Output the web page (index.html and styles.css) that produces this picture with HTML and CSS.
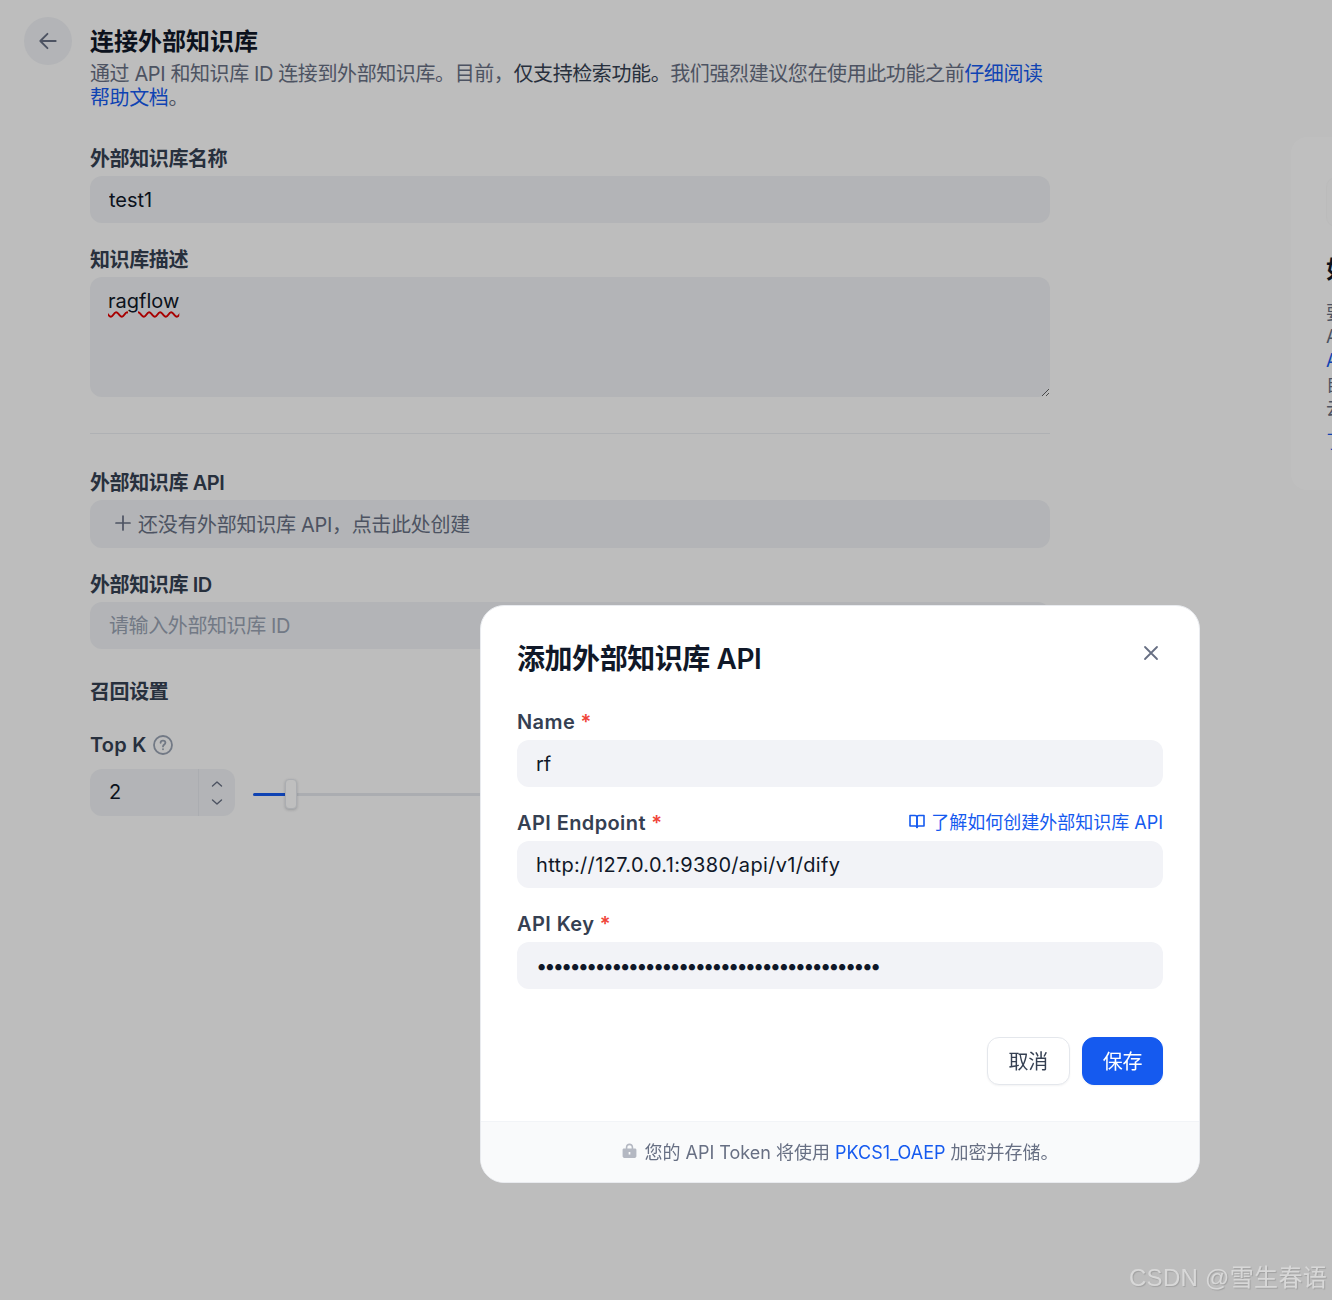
FILE: index.html
```html
<!DOCTYPE html>
<html lang="zh-CN">

<head>
  <meta charset="UTF-8">
  <meta name="viewport" content="width=device-width, initial-scale=1.0">
  <title>连接外部知识库</title>
  <link rel="stylesheet" href="styles.css">
</head>

<body>
  <div class="page">
    <button class="back" type="button" aria-label="返回">
      <svg width="22" height="22" viewBox="0 0 20 20" fill="none" stroke="currentColor" stroke-width="1.7" stroke-linecap="round" stroke-linejoin="round">
        <path d="M17 10H3M9.5 3.5L3 10L9.5 16.5" />
      </svg>
    </button>

    <main class="form">
      <h1 class="form__title">连接外部知识库</h1>
      <p class="form__desc">通过 API 和知识库 ID 连接到外部知识库。目前，<span class="form__desc-strong">仅支持检索功能。</span>我们强烈建议您在使用此功能之前<a href="#" class="link">仔细阅读帮助文档</a>。</p>

      <div class="field field--first">
        <label class="field__label">外部知识库名称</label>
        <input class="input" type="text" value="test1">
      </div>

      <div class="field">
        <label class="field__label">知识库描述</label>
        <div class="textarea"><span class="misspelt">ragflow</span></div>
      </div>

      <hr class="divider">

      <div class="field">
        <label class="field__label">外部知识库 API</label>
        <button class="add-api" type="button">
          <svg width="20" height="20" viewBox="0 0 20 20" fill="none" stroke="currentColor" stroke-width="1.7" stroke-linecap="round">
            <path d="M10 3V17M3 10H17" />
          </svg>
          <span>还没有外部知识库 API，点击此处创建</span>
        </button>
      </div>

      <div class="field">
        <label class="field__label">外部知识库 ID</label>
        <input class="input" type="text" placeholder="请输入外部知识库 ID">
      </div>

      <h2 class="form__section">召回设置</h2>

      <div class="topk">
        <div class="topk__label">
          Top K
          <svg class="topk__help" width="20" height="20" viewBox="0 0 20 20" fill="none" stroke="currentColor" stroke-width="1.8" stroke-linecap="round">
            <circle cx="10" cy="10" r="9" />
            <path d="M7.6 7.8C7.6 6.4 8.7 5.6 10 5.6C11.3 5.6 12.4 6.4 12.4 7.7C12.4 9.4 10 9.5 10 11.4" />
            <path d="M10 14.2V14.3" />
          </svg>
        </div>
        <div class="topk__row">
          <div class="stepper">
            <input class="stepper__value" type="text" value="2">
            <div class="stepper__btns">
              <svg width="12" height="8" viewBox="0 0 12 8" fill="none" stroke="currentColor" stroke-width="1.4" stroke-linecap="round" stroke-linejoin="round"><path d="M1.5 6L6 2L10.5 6" /></svg>
              <svg width="12" height="8" viewBox="0 0 12 8" fill="none" stroke="currentColor" stroke-width="1.4" stroke-linecap="round" stroke-linejoin="round"><path d="M1.5 2L6 6L10.5 2" /></svg>
            </div>
          </div>
          <div class="slider">
            <div class="slider__fill"></div>
            <div class="slider__thumb"></div>
          </div>
        </div>
      </div>
    </main>

    <aside class="guide">
      <div class="guide__icon"></div>
      <h3 class="guide__title">如何创建外部知识库 API</h3>
      <p class="guide__text">要连接到外部知识库，需要先创建外部知识库</p>
      <p class="guide__text">API，请仔细阅读并参考</p>
      <p class="guide__text guide__text--link">API 规范文档</p>
      <p class="guide__text">自行开发或部署相应的服务</p>
      <p class="guide__text">云端服务也可以直接连接</p>
      <p class="guide__more">了解更多</p>
    </aside>
  </div>

  <div class="overlay">
    <section class="modal">
      <div class="modal__body">
        <header class="modal__head">
          <h2 class="modal__title">添加外部知识库 API</h2>
          <svg class="modal__close" width="24" height="24" viewBox="0 0 24 24" fill="none" stroke="currentColor" stroke-width="1.8" stroke-linecap="round">
            <path d="M6 6L18 18M18 6L6 18" />
          </svg>
        </header>

        <div class="mfield">
          <div class="mfield__head">
            <label class="mfield__label">Name <span class="req">*</span></label>
          </div>
          <input class="input" type="text" value="rf">
        </div>

        <div class="mfield">
          <div class="mfield__head">
            <label class="mfield__label">API Endpoint <span class="req">*</span></label>
            <a href="#" class="mfield__help">
              <svg width="18" height="18" viewBox="0 0 18 18" fill="none" stroke="currentColor" stroke-width="1.6" stroke-linejoin="round">
                <path d="M2 3.5H7C8.1 3.5 9 4.4 9 5.5V15.5C9 14.6 8.3 14 7.4 14H2V3.5Z" />
                <path d="M16 3.5H11C9.9 3.5 9 4.4 9 5.5V15.5C9 14.6 9.7 14 10.6 14H16V3.5Z" />
              </svg>
              了解如何创建外部知识库 API
            </a>
          </div>
          <input class="input input--url" type="text" value="http://127.0.0.1:9380/api/v1/dify">
        </div>

        <div class="mfield">
          <div class="mfield__head">
            <label class="mfield__label">API Key <span class="req">*</span></label>
          </div>
          <input class="input input--secret" type="password" value="ragflow-A1b2C3d4E5f6G7h8I9j0K1l2M3n4O5p6Q">
        </div>

        <div class="modal__actions">
          <button class="btn" type="button">取消</button>
          <button class="btn btn--primary" type="button">保存</button>
        </div>
      </div>

      <footer class="modal__foot">
        <svg width="17" height="17" viewBox="0 0 16 16" fill="currentColor">
          <path fill-rule="evenodd" d="M4.5 6V5C4.5 3 6 1.5 8 1.5C10 1.5 11.5 3 11.5 5V6H13C13.6 6 14.5 6.4 14.5 7.2V13.5C14.5 14.3 13.8 15 13 15H3C2.2 15 1.5 14.3 1.5 13.5V7.2C1.5 6.4 2.2 6 3 6H4.5ZM6 6H10V5C10 3.9 9.1 3 8 3C6.9 3 6 3.9 6 5V6ZM7.2 9.5V11.8H8.8V9.5H7.2Z" />
        </svg>
        <span>您的 API Token 将使用 <a href="#" class="link">PKCS1_OAEP</a> 加密并存储。</span>
      </footer>
    </section>
  </div>

  <div class="watermark">CSDN @雪生春语</div>
</body>

</html>
```
FILE: styles.css
```css
* {
  margin: 0;
  padding: 0;
  box-sizing: border-box;
}

html,
body {
  height: 100%;
  overflow: hidden;
}

body {
  font-family: Inter, 'Noto Sans CJK SC', sans-serif;
  background-color: #fcfcfc;
  color: #101828;
}

a {
  text-decoration: none;
}

button,
input {
  font: inherit;
  border: none;
  outline: none;
}

.link {
  color: #155aef;
}

.page {
  display: flex;
  align-items: flex-start;
  width: 100%;
  height: 100%;
  padding: 17px 0 0 24px;
  overflow: hidden;
}

.back {
  flex: none;
  display: flex;
  align-items: center;
  justify-content: center;
  width: 48px;
  height: 48px;
  margin-right: 18px;
  border-radius: 50%;
  background-color: #eff1f4;
  color: #676f83;
}

/* FORM */
.form {
  flex: none;
  width: 960px;
  padding-top: 9px;
}

.form__title {
  font-size: 24px;
  font-weight: 600;
  line-height: 32px;
}

.form__desc {
  margin-top: 4px;
  font-size: 20px;
  line-height: 24px;
  letter-spacing: -0.4px;
  color: #676f83;
}

.form__desc-strong {
  color: #354052;
}

.form__section {
  margin-top: 30px;
  padding-top: 1px;
  height: 24px;
  font-size: 20px;
  font-weight: 600;
  line-height: 24px;
  letter-spacing: -0.4px;
  color: #354052;
}

.field {
  margin-top: 24px;
}

.field--first {
  margin-top: 36px;
}

.field__label {
  display: block;
  height: 30px;
  padding-top: 1px;
  font-size: 20px;
  font-weight: 600;
  line-height: 24px;
  letter-spacing: -0.4px;
  color: #354052;
}

.input {
  display: block;
  width: 100%;
  height: 47px;
  padding: 0 19px;
  border-radius: 12px;
  background-color: #eff1f4;
  font-size: 20px;
  color: #101828;
}

.input::placeholder {
  letter-spacing: -0.4px;
  color: #98a2b2;
}

.input--url {
  letter-spacing: 0.33px;
}

.input--secret {
  letter-spacing: -2.9px;
}

.mfield .input {
  background-color: #f2f3f7;
}

.textarea {
  height: 120px;
  padding: 11px 18px;
  border-radius: 12px;
  background-color: #eff1f4;
  font-size: 20px;
  line-height: 26px;
  overflow: auto;
  resize: vertical;
}

.misspelt {
  text-decoration: underline wavy #e00000 1.5px;
  text-underline-offset: 3px;
}

.divider {
  height: 1px;
  margin: 36px 0;
  border: none;
  background-color: #eaecf0;
}

.divider + .field {
  margin-top: 0;
}

.add-api {
  display: flex;
  align-items: center;
  gap: 5px;
  width: 100%;
  height: 48px;
  padding: 0 23px 2px;
  border-radius: 12px;
  background-color: #eff1f4;
  font-size: 20px;
  letter-spacing: -0.3px;
  color: #676f83;
}

/* TOP K */
.topk {
  margin-top: 30px;
}

.topk__label {
  display: flex;
  align-items: center;
  gap: 7px;
  height: 24px;
  margin-bottom: 12px;
  font-size: 20px;
  font-weight: 600;
  letter-spacing: 0.2px;
  color: #354052;
}

.topk__help {
  color: #98a2b2;
}

.topk__row {
  display: flex;
  align-items: center;
  gap: 18px;
}

.stepper {
  flex: none;
  display: flex;
  width: 145px;
  height: 47px;
  border-radius: 12px;
  background-color: #eff1f4;
  overflow: hidden;
}

.stepper__value {
  width: 108px;
  padding: 0 0 2px 19px;
  background: none;
  font-size: 20px;
  color: #101828;
}

.stepper__btns {
  flex: 1;
  display: flex;
  flex-direction: column;
  align-items: center;
  justify-content: center;
  gap: 10px;
  border-left: 1px solid #e4e7ec;
  color: #676f83;
}

.slider {
  position: relative;
  flex: 1;
  height: 3px;
  margin-top: 3px;
  border-radius: 2px;
  background-color: #e4e7ec;
}

.slider__fill {
  width: 32px;
  height: 100%;
  border-radius: 2px 0 0 2px;
  background-color: #155aef;
}

.slider__thumb {
  position: absolute;
  left: 32px;
  top: -14px;
  width: 12px;
  height: 30px;
  border: 1px solid #e4e7ec;
  border-radius: 4px;
  background-color: #fff;
  box-shadow: 0 1px 3px rgba(16, 24, 40, 0.2);
}

/* RIGHT PANEL */
.guide {
  flex: none;
  width: 400px;
  height: 353px;
  margin: 120px 0 0 241px;
  padding: 40px 35px 0;
  border-radius: 16px;
  background-color: #fff;
  white-space: nowrap;
  color: #676f83;
  font-size: 18px;
  line-height: 24px;
}

.guide__icon {
  width: 48px;
  height: 50px;
  border: 1px solid #fafafa;
  border-radius: 10px;
  background-color: #fefefe;
}

.guide__title {
  margin: 30px 0 18px;
  font-size: 24px;
  font-weight: 600;
  line-height: 26px;
  color: #101828;
}

.guide__text--link {
  color: #155aef;
}

.guide__more {
  margin-top: 9px;
  color: #155aef;
}

/* MODAL */
.overlay {
  position: fixed;
  inset: 0;
  background-color: rgba(0, 0, 0, 0.25);
}

.modal {
  position: absolute;
  left: 480px;
  top: 605px;
  width: 720px;
  height: 578px;
  display: flex;
  flex-direction: column;
  border: 1px solid #e9ebef;
  border-radius: 24px;
  background-color: #fff;
  overflow: hidden;
}

.modal__body {
  flex: 1;
  padding: 34px 36px 0;
}

.modal__head {
  display: flex;
  justify-content: space-between;
  align-items: flex-start;
  margin-bottom: 33px;
}

.modal__title {
  padding-top: 1px;
  height: 36px;
  font-size: 28px;
  font-weight: 600;
  line-height: 36px;
  letter-spacing: -0.45px;
  color: #101828;
}

.modal__close {
  margin-top: 1px;
  color: #676f83;
}

.mfield {
  margin-bottom: 23px;
}

.mfield__head {
  display: flex;
  justify-content: space-between;
  align-items: center;
  height: 24px;
  margin-bottom: 7px;
}

.mfield__label {
  padding-top: 1px;
  font-size: 20px;
  font-weight: 600;
  letter-spacing: 0.4px;
  color: #354052;
}

.req {
  color: #f04438;
}

.mfield__help {
  display: flex;
  align-items: center;
  gap: 5px;
  padding-bottom: 2px;
  font-size: 18px;
  color: #155aef;
}

.modal__actions {
  display: flex;
  justify-content: flex-end;
  gap: 12px;
  margin-top: 48px;
}

.btn {
  height: 48px;
  padding: 0 21px 2px;
  border: 1px solid #e4e7ec;
  border-radius: 12px;
  background-color: #fff;
  font-size: 20px;
  letter-spacing: -0.4px;
  color: #354052;
  box-shadow: 0 1px 2px rgba(16, 24, 40, 0.05);
}

.btn--primary {
  padding: 0 20px 2px;
  border-color: #155aef;
  background-color: #155aef;
  color: #fff;
}

.modal__foot {
  display: flex;
  align-items: center;
  justify-content: center;
  height: 61px;
  gap: 6px;
  padding-bottom: 3px;
  border-top: 1px solid #f2f4f7;
  background-color: #f9fafb;
  font-size: 18px;
  color: #676f83;
}

.modal__foot svg {
  color: #b4b8c2;
}

.watermark {
  position: fixed;
  right: 5px;
  bottom: 6px;
  font-family: 'Liberation Sans', 'Noto Sans CJK SC', sans-serif;
  font-size: 24px;
  line-height: 32px;
  letter-spacing: 0.3px;
  color: #d8d8d8;
  text-shadow: 1px 1px 1px rgba(0, 0, 0, 0.15);
}
```
